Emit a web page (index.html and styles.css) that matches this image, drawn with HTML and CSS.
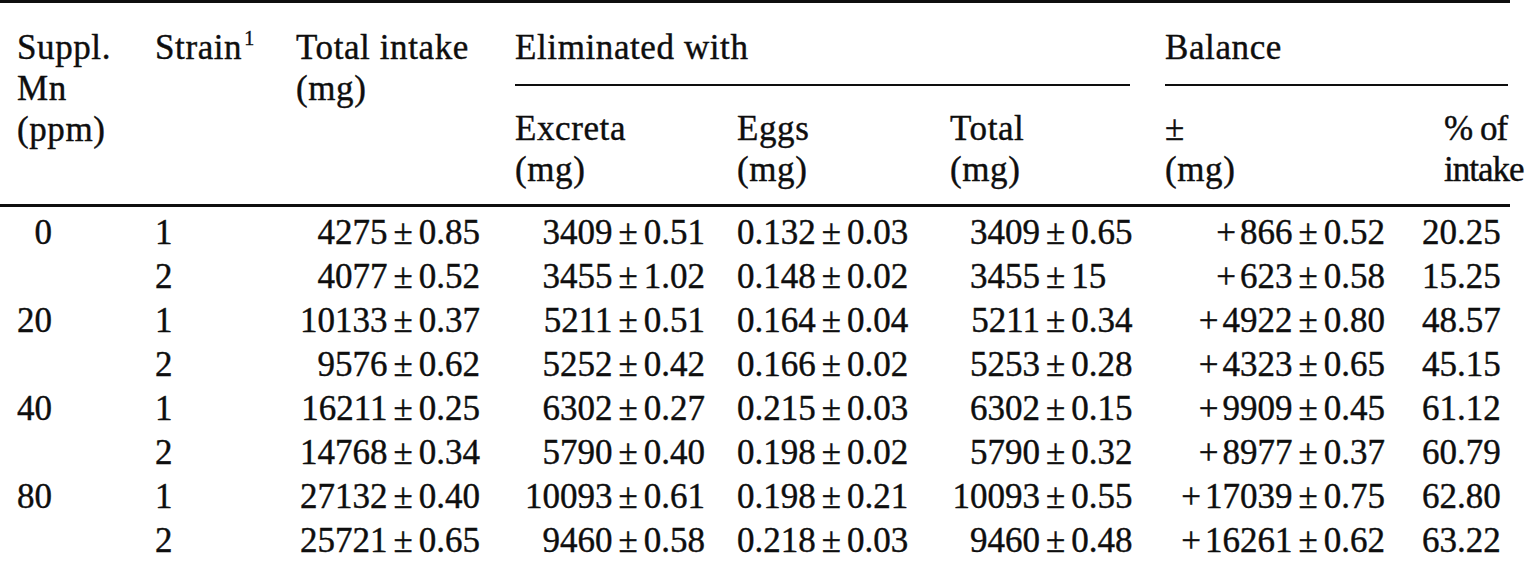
FILE: index.html
```html
<!DOCTYPE html>
<html>
<head>
<meta charset="utf-8">
<link rel="stylesheet" href="styles.css">
</head>
<body>
<table class="tbl">
  <colgroup>
    <col class="c1"><col class="c2"><col class="c3"><col class="c4"><col class="c5"><col class="c6"><col class="c7"><col class="c8">
  </colgroup>
  <thead>
    <tr class="hr1">
      <th rowspan="2" class="h-suppl hb">Suppl.<br>Mn<br>(ppm)</th>
      <th rowspan="2" class="hb">Strain<sup>1</sup></th>
      <th rowspan="2" class="hb">Total intake<br>(mg)</th>
      <th colspan="3" class="group"><div class="group-label elim">Eliminated with</div></th>
      <th colspan="2" class="group"><div class="group-label bal">Balance</div></th>
    </tr>
    <tr class="hr2">
      <th>Excreta<br>(mg)</th>
      <th>Eggs<br>(mg)</th>
      <th>Total<br>(mg)</th>
      <th>±<br>(mg)</th>
      <th class="h-pct">% of<br>intake</th>
    </tr>
  </thead>
  <tbody>
    <tr class="first">
      <td class="supp"><span class="sv">0</span></td><td>1</td>
      <td class="r">4275<span class="pm">±</span>0.85</td>
      <td class="r ex">3409<span class="pm">±</span>0.51</td>
      <td>0.132<span class="pm">±</span>0.03</td>
      <td><span class="int">3409</span><span class="pm">±</span>0.65</td>
      <td class="r bal"><span class="plus">+</span>866<span class="pm">±</span>0.52</td>
      <td>20.25</td>
    </tr>
    <tr>
      <td class="supp"></td><td>2</td>
      <td class="r">4077<span class="pm">±</span>0.52</td>
      <td class="r ex">3455<span class="pm">±</span>1.02</td>
      <td>0.148<span class="pm">±</span>0.02</td>
      <td><span class="int">3455</span><span class="pm">±</span>15</td>
      <td class="r bal"><span class="plus">+</span>623<span class="pm">±</span>0.58</td>
      <td>15.25</td>
    </tr>
    <tr>
      <td class="supp"><span class="sv">20</span></td><td>1</td>
      <td class="r">10133<span class="pm">±</span>0.37</td>
      <td class="r ex">5211<span class="pm">±</span>0.51</td>
      <td>0.164<span class="pm">±</span>0.04</td>
      <td><span class="int">5211</span><span class="pm">±</span>0.34</td>
      <td class="r bal"><span class="plus">+</span>4922<span class="pm">±</span>0.80</td>
      <td>48.57</td>
    </tr>
    <tr>
      <td class="supp"></td><td>2</td>
      <td class="r">9576<span class="pm">±</span>0.62</td>
      <td class="r ex">5252<span class="pm">±</span>0.42</td>
      <td>0.166<span class="pm">±</span>0.02</td>
      <td><span class="int">5253</span><span class="pm">±</span>0.28</td>
      <td class="r bal"><span class="plus">+</span>4323<span class="pm">±</span>0.65</td>
      <td>45.15</td>
    </tr>
    <tr>
      <td class="supp"><span class="sv">40</span></td><td>1</td>
      <td class="r">16211<span class="pm">±</span>0.25</td>
      <td class="r ex">6302<span class="pm">±</span>0.27</td>
      <td>0.215<span class="pm">±</span>0.03</td>
      <td><span class="int">6302</span><span class="pm">±</span>0.15</td>
      <td class="r bal"><span class="plus">+</span>9909<span class="pm">±</span>0.45</td>
      <td>61.12</td>
    </tr>
    <tr>
      <td class="supp"></td><td>2</td>
      <td class="r">14768<span class="pm">±</span>0.34</td>
      <td class="r ex">5790<span class="pm">±</span>0.40</td>
      <td>0.198<span class="pm">±</span>0.02</td>
      <td><span class="int">5790</span><span class="pm">±</span>0.32</td>
      <td class="r bal"><span class="plus">+</span>8977<span class="pm">±</span>0.37</td>
      <td>60.79</td>
    </tr>
    <tr>
      <td class="supp"><span class="sv">80</span></td><td>1</td>
      <td class="r">27132<span class="pm">±</span>0.40</td>
      <td class="r ex">10093<span class="pm">±</span>0.61</td>
      <td>0.198<span class="pm">±</span>0.21</td>
      <td><span class="int">10093</span><span class="pm">±</span>0.55</td>
      <td class="r bal"><span class="plus">+</span>17039<span class="pm">±</span>0.75</td>
      <td>62.80</td>
    </tr>
    <tr>
      <td class="supp"></td><td>2</td>
      <td class="r">25721<span class="pm">±</span>0.65</td>
      <td class="r ex">9460<span class="pm">±</span>0.58</td>
      <td>0.218<span class="pm">±</span>0.03</td>
      <td><span class="int">9460</span><span class="pm">±</span>0.48</td>
      <td class="r bal"><span class="plus">+</span>16261<span class="pm">±</span>0.62</td>
      <td>63.22</td>
    </tr>
  </tbody>
</table>
</body>
</html>
```

FILE: styles.css
```css
html, body {
  margin: 0;
  padding: 0;
  background: #fff;
}

body {
  font-family: "Liberation Serif", "Times New Roman", serif;
  font-size: 35px;
  color: #0e0e0e;
  -webkit-text-stroke: 0.4px #0e0e0e;
}

.tbl {
  border-collapse: collapse;
  table-layout: fixed;
  width: 1510px;
  border-top: 3px solid #0e0e0e;
}

.c1 { width: 155px; }
.c2 { width: 141px; }
.c3 { width: 219px; }
.c4 { width: 222px; }
.c5 { width: 213px; }
.c6 { width: 215px; }
.c7 { width: 257px; }
.c8 { width: 88px; }

th {
  font-weight: normal;
  text-align: left;
  vertical-align: top;
  padding: 0;
  line-height: 41px;
  letter-spacing: 0.6px;
  white-space: nowrap;
}

.hr1 th {
  padding-top: 24px;
}

.hb {
  border-bottom: 3px solid #0e0e0e;
}

.h-suppl {
  padding-left: 17px;
}

sup {
  font-size: 20px;
  line-height: 0;
  vertical-align: 14px;
  margin-left: 2px;
}

.group-label {
  border-bottom: 2px solid #0e0e0e;
  padding-bottom: 16px;
}

.elim {
  margin-right: 35px;
}

.bal {
  margin-right: 2px;
}

.hr2 th {
  padding-top: 22px;
  padding-bottom: 14px;
  border-bottom: 3px solid #0e0e0e;
}

.hr2 th.h-pct {
  padding-left: 22px;
  letter-spacing: -1px;
}

td {
  padding: 0;
  height: 44px;
  line-height: 44px;
  vertical-align: middle;
  white-space: nowrap;
}

tbody tr.first td {
  padding-top: 4px;
}

.supp {
  padding-left: 17px;
}

.sv {
  display: inline-block;
  width: 35px;
  text-align: right;
}

.r {
  text-align: right;
  padding-right: 35px;
}

.r.ex {
  padding-right: 32px;
}

.r.bal {
  padding-right: 37px;
}

.pm {
  margin: 0 6px;
}

.plus {
  margin-right: 4px;
}

.int {
  display: inline-block;
  width: 90px;
  text-align: right;
}
```
